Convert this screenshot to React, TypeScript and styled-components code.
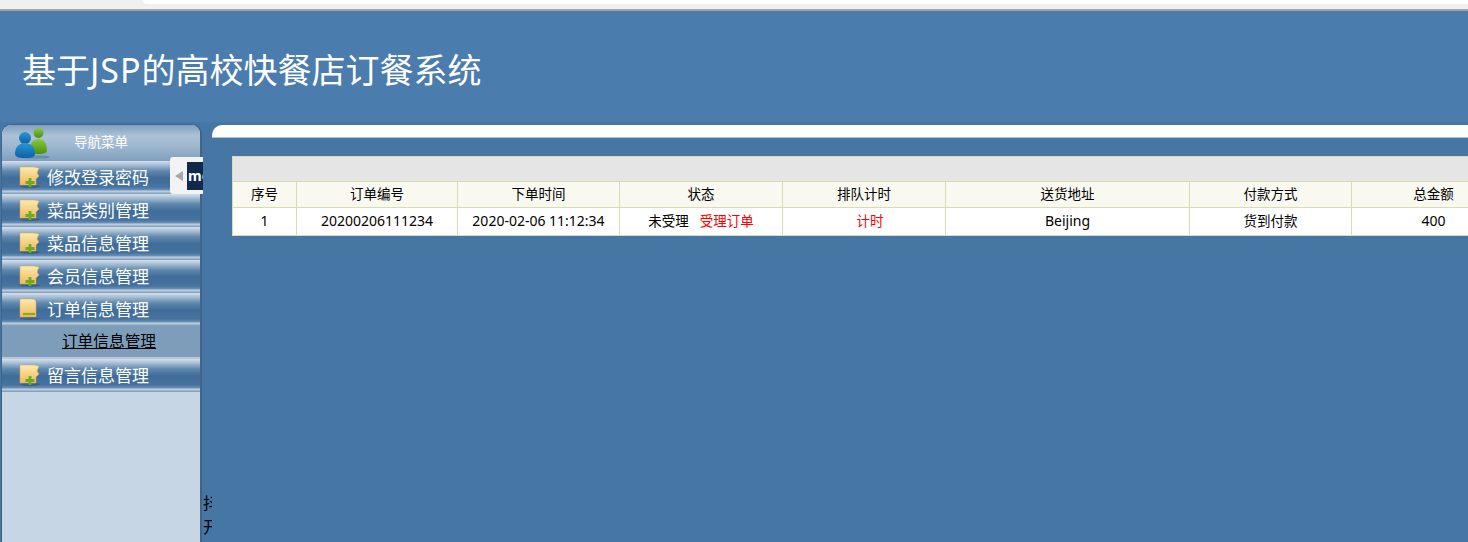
import styled, { createGlobalStyle } from "styled-components";

const GlobalStyle = createGlobalStyle`
	html, body {
		margin: 0;
		padding: 0;
		height: 100%;
		overflow: hidden;
		background: #4676a3;
	}
	body {
		font-family: "Noto Sans", "Noto Sans CJK SC", sans-serif;
		font-size: 12px;
	}
`;

const menuList = [
	{ name: "修改登录密码", open: false },
	{ name: "菜品类别管理", open: false },
	{ name: "菜品信息管理", open: false },
	{ name: "会员信息管理", open: false },
	{ name: "订单信息管理", open: true },
	{ name: "留言信息管理", open: false },
];

const columns = [
	{ title: "序号", width: 64 },
	{ title: "订单编号", width: 161 },
	{ title: "下单时间", width: 162 },
	{ title: "状态", width: 163 },
	{ title: "排队计时", width: 163 },
	{ title: "送货地址", width: 244 },
	{ title: "付款方式", width: 162 },
	{ title: "总金额", width: 164 },
];

const FolderIcon = ({ open }: { open: boolean }) => (
	<svg width="22" height="24" viewBox="0 0 22 24">
		<defs>
			<linearGradient id="folderFill" x1="0" y1="0" x2="0" y2="1">
				<stop offset="0" stopColor="#fbeab0" />
				<stop offset="1" stopColor="#f1b958" />
			</linearGradient>
		</defs>
		<ellipse cx="11" cy="21.500" rx="10" ry="1.500" fill="#2c5275" opacity="0.55" />
		<path
			d={open ? "M1 2h12q4 0 4 3v15H1z" : "M1 2h14l5 1-2 5 2 3-3 3v6H1z"}
			fill="url(#folderFill)"
			stroke="#dca84e"
			strokeWidth="0.5"
		/>
		{open ? (
			<path d="M4 17h12" stroke="#78b02c" strokeWidth="2.2" />
		) : (
			<path d="M11 13v9M6.500 17.500h9" stroke="#68ac22" strokeWidth="2.8" />
		)}
	</svg>
);

const UsersIcon = () => (
	<svg width="36" height="36" viewBox="0 0 36 36">
		<defs>
			<linearGradient id="blueUser" x1="0" y1="0" x2="0" y2="1">
				<stop offset="0" stopColor="#2b95d6" />
				<stop offset="1" stopColor="#0a62a8" />
			</linearGradient>
			<linearGradient id="greenUser" x1="0" y1="0" x2="0" y2="1">
				<stop offset="0" stopColor="#8cc63f" />
				<stop offset="1" stopColor="#4a9212" />
			</linearGradient>
		</defs>
		<ellipse cx="20" cy="32" rx="16" ry="1.600" fill="#57799b" opacity="0.6" />
		<circle cx="24.500" cy="8" r="5" fill="url(#greenUser)" />
		<path d="M16 25c0-7 3-11 8.500-11s8.500 4 8.500 11c0 3-3 4-8.500 4s-8.500-1-8.500-4z" fill="url(#greenUser)" />
		<circle cx="11" cy="13" r="6" fill="url(#blueUser)" />
		<path d="M1 29c0-7 4-11 10-11s10 4 10 11c0 3-4 4-10 4s-10-1-10-4z" fill="url(#blueUser)" />
	</svg>
);

export default function App() {
	return (
		<Page>
			<GlobalStyle />
			<BrowserStrip>
				<BrowserTab />
			</BrowserStrip>
			<Header>
				<Title>
					基于<LatinPart>JSP</LatinPart>的高校快餐店订餐系统
				</Title>
			</Header>
			<Body>
				<Sidebar>
					<SidebarHead>
						<UsersIcon />
						<SidebarTitle>导航菜单</SidebarTitle>
					</SidebarHead>
					{menuList.map((item) => (
						<div key={item.name}>
							<MenuItem>
								<FolderIcon open={item.open} />
								<span>{item.name}</span>
							</MenuItem>
							{item.open && (
								<SubMenu>
									<SubLink href="#">订单信息管理</SubLink>
								</SubMenu>
							)}
						</div>
					))}
				</Sidebar>
				<Main>
					<WhiteBar />
					<TableWrap>
						<Table>
							<colgroup>
								{columns.map((col) => (
									<col key={col.title} style={{ width: col.width }} />
								))}
							</colgroup>
							<tbody>
								<tr>
									<CaptionCell colSpan={8} />
								</tr>
								<tr>
									{columns.map((col) => (
										<HeadCell key={col.title}>{col.title}</HeadCell>
									))}
								</tr>
								<tr>
									<DataCell>1</DataCell>
									<DataCell>20200206111234</DataCell>
									<DataCell>2020-02-06 11:12:34</DataCell>
									<DataCell>
										<CjkText>未受理</CjkText>
										<RedText $gap={11}>受理订单</RedText>
									</DataCell>
									<DataCell>
										<RedText $gap={12}>计时</RedText>
									</DataCell>
									<DataCell>Beijing</DataCell>
									<DataCell>
										<CjkText>货到付款</CjkText>
									</DataCell>
									<DataCell>400</DataCell>
								</tr>
							</tbody>
						</Table>
					</TableWrap>
				</Main>
				<SideTab>
					<TabArrow />
					<TabLogo>mo</TabLogo>
				</SideTab>
				<ClippedText>
					抖<br />开
				</ClippedText>
			</Body>
		</Page>
	);
}

const Page = styled.div`
	width: 1468px;
	height: 542px;
	overflow: hidden;
	background: #4676a3;
	display: flex;
	flex-direction: column;
`;
const BrowserStrip = styled.div`
	height: 9px;
	flex: none;
	background: #f0f0f0;
	border-bottom: 2px solid #a3a3a3;
	overflow: hidden;
`;
const BrowserTab = styled.div`
	height: 4px;
	margin-left: 143px;
	background: #ffffff;
	border-radius: 0 0 0 6px;
`;
const Header = styled.div`
	height: 111px;
	flex: none;
	display: flex;
	align-items: center;
	padding: 3px 0 0 22px;
	box-sizing: border-box;
	background: #4a7cad;
`;
const Title = styled.h1`
	margin: 0;
	color: #ffffff;
	font-size: 34px;
	font-weight: 400;
	white-space: nowrap;
`;
const LatinPart = styled.span`
	letter-spacing: 1px;
`;
const Body = styled.div`
	position: relative;
	flex: 1;
	display: flex;
	min-height: 0;
`;
const Sidebar = styled.div`
	width: 198px;
	flex: none;
	margin-left: 1px;
	margin-top: 2px;
	background: #c6d6e4;
	border: solid #3f6488;
	border-width: 1px 2px 0 1px;
	border-radius: 10px 10px 0 0;
	overflow: hidden;
`;
const SidebarHead = styled.div`
	height: 36px;
	display: flex;
	align-items: center;
	padding-left: 12px;
	background: linear-gradient(#7ea0bf, #abc2d7 30%, #9db7cf 60%, #7f9fbe);
	svg {
		margin-top: -1px;
	}
`;
const SidebarTitle = styled.span`
	margin: -4px 0 0 24px;
	color: #ffffff;
	font-size: 13.5px;
`;
const MenuItem = styled.div`
	height: 33px;
	box-sizing: border-box;
	display: flex;
	align-items: center;
	gap: 6px;
	padding: 0 0 2px 17px;
	color: #ffffff;
	font-size: 17px;
	background: linear-gradient(
		#d5dfeb 0,
		#b4c7da 3px,
		#5f88ae 10px,
		#3f6c98 17px,
		#46739f 26px,
		#6b91b5 29px,
		#c7d5e3 30px,
		#7797b7 33px
	);
`;
const SubMenu = styled.div`
	height: 33px;
	box-sizing: border-box;
	background: #7d9dbb;
	border-bottom: 2px solid #b7c8d9;
	text-align: center;
	padding: 3px 0 0 16px;
`;
const SubLink = styled.a`
	color: #000000;
	font-size: 15.700px;
	text-decoration: underline;
`;
const Main = styled.div`
	flex: 1;
	min-width: 0;
	padding: 3px 0 0 10px;
	background: #4676a3;
`;
const WhiteBar = styled.div`
	height: 12px;
	background: #ffffff;
	border-bottom: 1px solid #a9c3da;
	border-radius: 10px 0 0 0;
`;
const TableWrap = styled.div`
	margin: 18px 0 0 20px;
	overflow: hidden;
`;
const Table = styled.table`
	width: 1283px;
	table-layout: fixed;
	border-collapse: collapse;
	border: 1px solid #d7dcb4;
	color: #000000;
	font-size: 13.500px;
`;
const CaptionCell = styled.td`
	height: 24px;
	padding: 0;
	background: #e5e5e5;
	border: 1px solid #d7dcb4;
`;
const HeadCell = styled.td`
	height: 26px;
	padding: 0 0 2px;
	box-sizing: border-box;
	line-height: 20px;
	text-align: center;
	background: #f9f9f0;
	border: 1px solid #d7dcb4;
`;
const DataCell = styled.td`
	height: 28px;
	padding: 0 0 2px;
	box-sizing: border-box;
	line-height: 20px;
	text-align: center;
	background: #ffffff;
	border: 1px solid #d7dcb4;
	font-size: 14px;
`;
const CjkText = styled.span`
	font-size: 13.500px;
`;
const RedText = styled.span<{ $gap: number }>`
	color: #ff0000;
	font-size: 13.500px;
	margin-left: ${({ $gap }) => $gap}px;
`;
const SideTab = styled.div`
	position: absolute;
	left: 170px;
	top: 35px;
	width: 33px;
	height: 37px;
	box-sizing: border-box;
	display: flex;
	align-items: center;
	padding-left: 5px;
	gap: 4px;
	background: #f3f3f3;
	border-radius: 3px 0 0 3px;
	overflow: hidden;
`;
const TabArrow = styled.div`
	flex: none;
	width: 0;
	height: 0;
	border: solid transparent;
	border-width: 5px 8px 5px 0;
	border-right-color: #a8a8a8;
`;
const TabLogo = styled.div`
	flex: none;
	width: 20px;
	height: 28px;
	background: #0f2a4a;
	color: #ffffff;
	font-size: 14px;
	font-weight: 700;
	line-height: 28px;
	padding-left: 1px;
	overflow: hidden;
`;
const ClippedText = styled.div`
	position: absolute;
	left: 203px;
	top: 369px;
	width: 9px;
	overflow: hidden;
	color: #000000;
	font-size: 16px;
	line-height: 24px;
`;
